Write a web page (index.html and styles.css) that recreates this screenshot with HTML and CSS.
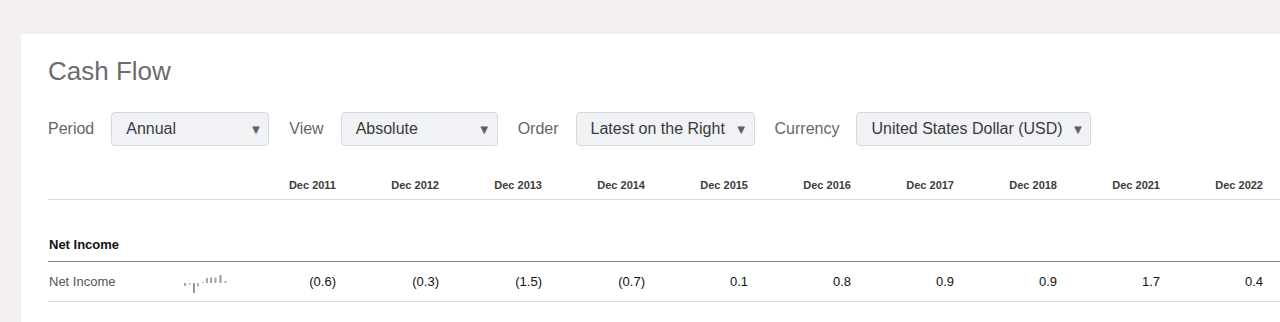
FILE: index.html
```html
<!DOCTYPE html>
<html>
<head>
<meta charset="utf-8">
<link rel="stylesheet" href="styles.css">
</head>
<body>
<div class="card">
  <h1 class="title">Cash Flow</h1>
  <div class="controls">
    <span class="label">Period</span>
    <div class="select w-period"><span>Annual</span><span class="arrow">▼</span></div>
    <span class="label">View</span>
    <div class="select w-view"><span>Absolute</span><span class="arrow">▼</span></div>
    <span class="label">Order</span>
    <div class="select w-order"><span>Latest on the Right</span><span class="arrow">▼</span></div>
    <span class="label">Currency</span>
    <div class="select w-cur"><span>United States Dollar (USD)</span><span class="arrow">▼</span></div>
  </div>
  <div class="table">
    <div class="row head">
      <div></div><div></div>
      <div class="num">Dec 2011</div><div class="num">Dec 2012</div><div class="num">Dec 2013</div><div class="num">Dec 2014</div><div class="num">Dec 2015</div>
      <div class="num">Dec 2016</div><div class="num">Dec 2017</div><div class="num">Dec 2018</div><div class="num">Dec 2021</div><div class="num">Dec 2022</div>
      <div></div>
    </div>
    <div class="row section">
      <div class="sec-title">Net Income</div>
    </div>
    <div class="row data">
      <div class="name">Net Income</div>
      <div class="spark">
        <svg width="48" height="24" viewBox="0 0 48 24">
          <rect x="1" y="13" width="2" height="3" fill="#a8a8a8"/>
          <rect x="6" y="13" width="2" height="2" fill="#c4c4c4"/>
          <rect x="10" y="13" width="2" height="10" fill="#999"/>
          <rect x="14" y="13" width="2" height="3.5" fill="#b0b0b0"/>
          <rect x="19" y="12" width="2" height="1" fill="#bbb"/>
          <rect x="23" y="8" width="2" height="5" fill="#a6a6a6"/>
          <rect x="27" y="7.5" width="2" height="5.5" fill="#a0a0a0"/>
          <rect x="31.5" y="7.5" width="2" height="5.5" fill="#a0a0a0"/>
          <rect x="36.5" y="5" width="2" height="8" fill="#999"/>
          <rect x="41.5" y="11" width="2" height="2" fill="#aaa"/>
        </svg>
      </div>
      <div class="num">(0.6)</div><div class="num">(0.3)</div><div class="num">(1.5)</div><div class="num">(0.7)</div><div class="num">0.1</div>
      <div class="num">0.8</div><div class="num">0.9</div><div class="num">0.9</div><div class="num">1.7</div><div class="num">0.4</div>
      <div></div>
    </div>
  </div>
</div>
</body>
</html>
```
FILE: styles.css
```css
html, body {
  margin: 0;
  padding: 0;
}
body {
  background: #f4f0ef;
  font-family: "Liberation Sans", Arial, sans-serif;
  overflow: hidden;
}
.card {
  background: #fff;
  margin: 34px 0 0 21px;
  padding: 22px 0 40px 27px;
}
.title {
  margin: 0;
  font-size: 26px;
  line-height: 30px;
  font-weight: normal;
  color: #6b6b6b;
}
.controls {
  display: flex;
  align-items: center;
  margin-top: 26px;
  height: 34px;
}
.label {
  font-size: 16px;
  color: #666;
  margin-right: 17px;
}
.select {
  box-sizing: border-box;
  height: 34px;
  display: flex;
  align-items: center;
  justify-content: space-between;
  background: #f1f2f6;
  border: 1px solid #d8d8dc;
  border-radius: 4px;
  padding: 0 6px 0 14px;
  font-size: 16px;
  color: #3a3a3a;
  margin-right: 20px;
}
.arrow {
  font-size: 13px;
  color: #5f5f5f;
}
.w-period { width: 158px; }
.w-view { width: 157px; }
.w-order { width: 179px; }
.w-cur { width: 235px; }
.table {
  margin-top: 19px;
}
.row {
  display: grid;
  grid-template-columns: 122px 72px repeat(10, 103px) 1fr;
  align-items: center;
}
.num {
  text-align: right;
  padding-right: 9px;
}
.head {
  height: 34px;
  align-items: end;
  border-bottom: 1px solid #dcdcdc;
  font-size: 11px;
  font-weight: bold;
  color: #3c3c3c;
}
.head > div {
  padding-bottom: 7px;
  line-height: 14px;
}
.section {
  height: 61px;
  align-items: end;
  border-bottom: 1px solid #80868a;
}
.sec-title {
  grid-column: 1 / span 3;
  font-size: 13px;
  font-weight: bold;
  color: #111;
  line-height: 16px;
  padding-bottom: 8px;
  padding-left: 1px;
}
.data {
  height: 39px;
  border-bottom: 1px solid #dcdcdc;
  font-size: 13px;
  color: #111;
}
.name {
  color: #555;
  padding-left: 1px;
}
.spark {
  display: flex;
  padding-left: 13px;
  padding-top: 1px;
}
.spark svg {
  display: block;
}
```
